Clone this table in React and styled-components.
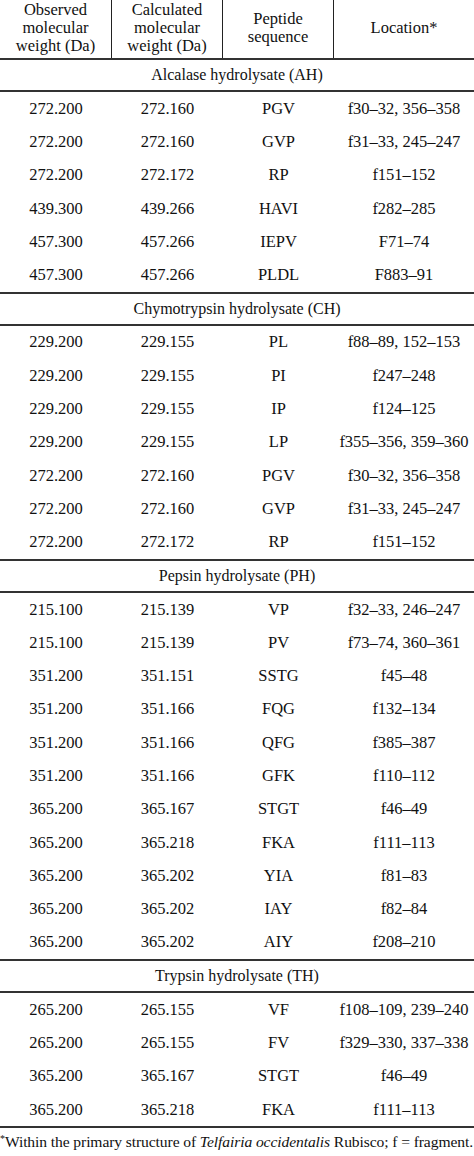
import React from "react";
import styled, { createGlobalStyle } from "styled-components";

const sections = [
  {
    title: "Alcalase hydrolysate (AH)",
    first: true,
    rows: [
      ["272.200", "272.160", "PGV", "f30–32, 356–358"],
      ["272.200", "272.160", "GVP", "f31–33, 245–247"],
      ["272.200", "272.172", "RP", "f151–152"],
      ["439.300", "439.266", "HAVI", "f282–285"],
      ["457.300", "457.266", "IEPV", "F71–74"],
      ["457.300", "457.266", "PLDL", "F883–91"],
    ],
  },
  {
    title: "Chymotrypsin hydrolysate (CH)",
    rows: [
      ["229.200", "229.155", "PL", "f88–89, 152–153"],
      ["229.200", "229.155", "PI", "f247–248"],
      ["229.200", "229.155", "IP", "f124–125"],
      ["229.200", "229.155", "LP", "f355–356, 359–360"],
      ["272.200", "272.160", "PGV", "f30–32, 356–358"],
      ["272.200", "272.160", "GVP", "f31–33, 245–247"],
      ["272.200", "272.172", "RP", "f151–152"],
    ],
  },
  {
    title: "Pepsin hydrolysate (PH)",
    rows: [
      ["215.100", "215.139", "VP", "f32–33, 246–247"],
      ["215.100", "215.139", "PV", "f73–74, 360–361"],
      ["351.200", "351.151", "SSTG", "f45–48"],
      ["351.200", "351.166", "FQG", "f132–134"],
      ["351.200", "351.166", "QFG", "f385–387"],
      ["351.200", "351.166", "GFK", "f110–112"],
      ["365.200", "365.167", "STGT", "f46–49"],
      ["365.200", "365.218", "FKA", "f111–113"],
      ["365.200", "365.202", "YIA", "f81–83"],
      ["365.200", "365.202", "IAY", "f82–84"],
      ["365.200", "365.202", "AIY", "f208–210"],
    ],
  },
  {
    title: "Trypsin hydrolysate (TH)",
    rows: [
      ["265.200", "265.155", "VF", "f108–109, 239–240"],
      ["265.200", "265.155", "FV", "f329–330, 337–338"],
      ["365.200", "365.167", "STGT", "f46–49"],
      ["365.200", "365.218", "FKA", "f111–113"],
    ],
  },
];

const Global = createGlobalStyle`
  html, body {
    margin: 0;
    padding: 0;
    background: #fff;
  }
  body {
    font-family: "Liberation Serif", "Times New Roman", serif;
    color: #111;
  }
`;

const Page = styled.div`
  width: 474px;
  height: 1156px;
  overflow: hidden;
`;

const Table = styled.div`
  border-bottom: 2px solid #333;
`;

const Grid = styled.div`
  display: grid;
  grid-template-columns: 112px 111px 111px 140px;
`;

const HeadRow = styled(Grid)`
  height: 60px;
  box-sizing: border-box;
  border-bottom: 2px solid #333;
`;

const HeadCell = styled.div`
  display: flex;
  align-items: center;
  justify-content: center;
  text-align: center;
  font-size: 16.5px;
  line-height: 18px;
  padding-bottom: 2px;
  border-right: ${({ $last }) => ($last ? "none" : "1px solid #222")};
`;

const Band = styled.div`
  box-sizing: border-box;
  height: ${({ $first }) => ($first ? "32px" : "34px")};
  border-top: ${({ $first }) => ($first ? "none" : "2px solid #333")};
  border-bottom: 2px solid #333;
  display: flex;
  align-items: center;
  justify-content: center;
  font-size: 16px;
`;

const Row = styled(Grid)`
  height: 33.3px;
  align-items: center;
`;

const Cell = styled.div`
  text-align: center;
  font-size: 16.5px;
  white-space: nowrap;
`;

const Note = styled.div`
  font-size: 15.6px;
  white-space: nowrap;
  padding-top: 5px;
  letter-spacing: -0.1px;
  sup {
    font-size: 10px;
    vertical-align: 5px;
  }
`;

export default function App() {
  return (
    <Page>
      <Global />
      <Table>
        <HeadRow>
          <HeadCell>
            Observed
            <br />
            molecular
            <br />
            weight (Da)
          </HeadCell>
          <HeadCell>
            Calculated
            <br />
            molecular
            <br />
            weight (Da)
          </HeadCell>
          <HeadCell>
            Peptide
            <br />
            sequence
          </HeadCell>
          <HeadCell $last>Location*</HeadCell>
        </HeadRow>
        {sections.map((s) => (
          <React.Fragment key={s.title}>
            <Band $first={s.first}>{s.title}</Band>
            {s.rows.map((r, i) => (
              <Row key={i}>
                {r.map((v, j) => (
                  <Cell key={j}>{v}</Cell>
                ))}
              </Row>
            ))}
          </React.Fragment>
        ))}
      </Table>
      <Note>
        <sup>*</sup>Within the primary structure of <i>Telfairia occidentalis</i>{" "}
        Rubisco; f = fragment.
      </Note>
    </Page>
  );
}
